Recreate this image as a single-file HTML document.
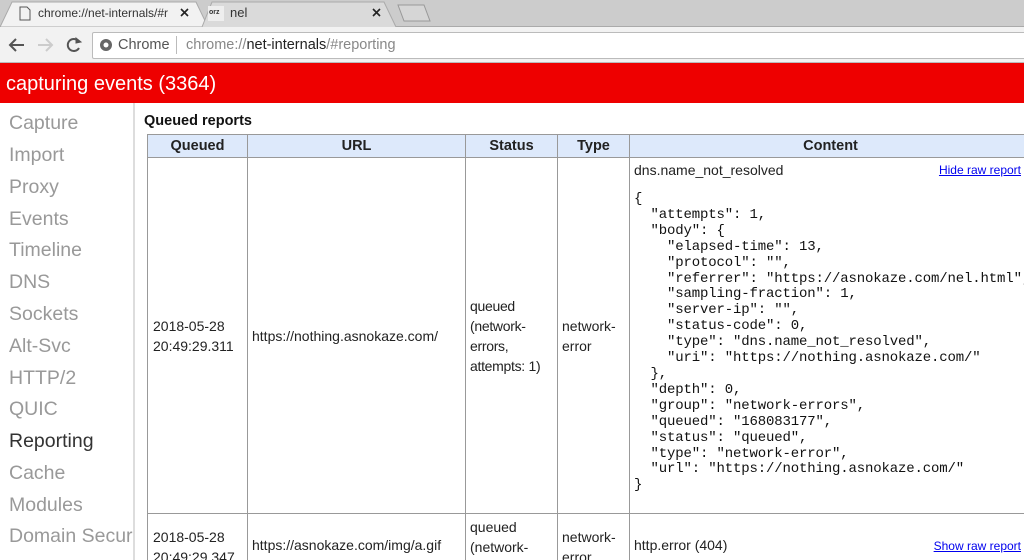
<!DOCTYPE html>
<html><head><meta charset="utf-8">
<style>
*{margin:0;padding:0;box-sizing:border-box}
html,body{width:1024px;height:560px;overflow:hidden}
body{background:#fff;font-family:"Liberation Sans",sans-serif;position:relative}
.abs{position:absolute;white-space:nowrap}
.tabs{position:absolute;left:0;top:0;width:1024px;height:27px;background:#cccccc;border-bottom:1px solid #aaa}
.tool{position:absolute;left:0;top:27px;width:1024px;height:36px;background:#f2f2f2;border-bottom:1px solid #bbb}
.addr{position:absolute;left:92px;top:32px;width:940px;height:27px;background:#fff;border:1px solid #bbb;border-radius:2px}
.red{position:absolute;left:0;top:63px;width:1024px;height:40px;background:#ee0000;color:#fff;font-size:20px;padding:10px 0 0 6px}
.side{position:absolute;left:9px;font-size:19.5px;color:#999}
.vline{position:absolute;left:133px;top:103px;width:2px;height:457px;background:#ddd}
table{position:absolute;left:147px;top:134px;border-collapse:collapse;font-size:14px;color:#222;table-layout:fixed;width:884px}
td,th{border:1px solid #999;padding:0 4px;vertical-align:middle;text-align:left;line-height:20px;overflow:hidden}
th{background:#dde9fb;text-align:center;font-weight:bold;height:23px;font-size:14.5px}
pre{font-family:"Liberation Mono",monospace;font-size:14px;line-height:15.9px;color:#111;letter-spacing:-0.15px}
a{color:#00e;font-size:12px}
</style></head><body>
<div class="tabs"></div>
<svg class="abs" style="left:0;top:0" width="432" height="28">
<path d="M0 27 L12 2 L196 2 L208 27 Z" fill="#f2f2f2" stroke="#aaa"/>
<path d="M202 27 L212 2 L384 2 L396 27" fill="#dadada" stroke="#aaa"/>
<path d="M398 5 L424 5 L430 21 L404 21 Z" fill="#d6d6d6" stroke="#999"/>
<path d="M20 7 h7 l3 3 v10 h-10 z" fill="none" stroke="#555"/>
<path d="M181 9 l7 7 M188 9 l-7 7" stroke="#222" stroke-width="1.6"/>
<path d="M373 9 l7 7 M380 9 l-7 7" stroke="#222" stroke-width="1.6"/>
<rect x="208" y="6" width="16" height="15" fill="#eee"/>
</svg>
<div class="abs" style="left:38px;top:6px;font-size:12px;color:#333">chrome://net-internals/#r</div>
<div class="abs" style="left:209px;top:9px;font-size:7px;font-weight:bold;color:#333">orz</div>
<div class="abs" style="left:230px;top:5px;font-size:13px;color:#333">nel</div>
<div class="tool"></div>
<svg class="abs" style="left:0;top:30px" width="92" height="30">
<path d="M24 15 H10 M16 9 L10 15 L16 21" fill="none" stroke="#555" stroke-width="2"/>
<path d="M38 15 H52 M46 9 L52 15 L46 21" fill="none" stroke="#ccc" stroke-width="2"/>
<path d="M79 12 A6 6 0 1 0 79 18" fill="none" stroke="#555" stroke-width="2"/>
<path d="M76 8 L81 12 L76 13 Z" fill="#555" stroke="#555"/>
</svg>
<div class="addr"></div>
<svg class="abs" style="left:99px;top:38px" width="14" height="14"><circle cx="7" cy="7" r="6" fill="#666"/><circle cx="7" cy="7" r="2.5" fill="#fff"/></svg>
<div class="abs" style="left:118px;top:37px;font-size:14.5px;color:#555">Chrome</div>
<div class="abs" style="left:176px;top:36px;width:1px;height:18px;background:#bbb"></div>
<div class="abs" style="left:186px;top:37px;font-size:14.5px;color:#888">chrome://<span style="color:#222">net-internals</span>/#reporting</div>
<div class="red">capturing events (3364)</div>
<div class="vline"></div>
<div class="side" style="top:112px">Capture</div>
<div class="side" style="top:144px">Import</div>
<div class="side" style="top:176px">Proxy</div>
<div class="side" style="top:208px">Events</div>
<div class="side" style="top:239px">Timeline</div>
<div class="side" style="top:271px">DNS</div>
<div class="side" style="top:303px">Sockets</div>
<div class="side" style="top:335px">Alt-Svc</div>
<div class="side" style="top:367px">HTTP/2</div>
<div class="side" style="top:398px">QUIC</div>
<div class="side" style="top:430px;color:#333">Reporting</div>
<div class="side" style="top:462px">Cache</div>
<div class="side" style="top:494px">Modules</div>
<div class="side" style="top:525px">Domain Secur</div>
<div class="abs" style="left:144px;top:113px;font-size:14.5px;font-weight:bold;color:#111">Queued reports</div>
<table>
<colgroup><col style="width:100px"><col style="width:218px"><col style="width:92px"><col style="width:72px"><col style="width:402px"></colgroup>
<tr><th>Queued</th><th>URL</th><th>Status</th><th>Type</th><th>Content</th></tr>
<tr style="height:356px"><td style="padding-left:5px">2018-05-28<br>20:49:29.311</td><td>https://nothing.asnokaze.com/</td><td style="letter-spacing:-0.3px">queued<br>(network-<br>errors,<br>attempts: 1)</td><td>network-<br>error</td>
<td style="vertical-align:top;position:relative;padding-top:2px">dns.name_not_resolved<a style="position:absolute;right:10px;top:2px;text-decoration:underline">Hide raw report</a>
<pre style="margin-top:12px">{
  "attempts": 1,
  "body": {
    "elapsed-time": 13,
    "protocol": "",
    "referrer": "https://asnokaze.com/nel.html",
    "sampling-fraction": 1,
    "server-ip": "",
    "status-code": 0,
    "type": "dns.name_not_resolved",
    "uri": "https://nothing.asnokaze.com/"
  },
  "depth": 0,
  "group": "network-errors",
  "queued": "168083177",
  "status": "queued",
  "type": "network-error",
  "url": "https://nothing.asnokaze.com/"
}</pre></td></tr>
<tr style="height:70px"><td style="vertical-align:top;padding-top:13px;padding-left:5px">2018-05-28<br>20:49:29.347</td><td style="vertical-align:top;padding-top:21px">https://asnokaze.com/img/a.gif</td><td style="vertical-align:top;padding-top:3px">queued<br>(network-</td><td style="vertical-align:top;padding-top:13px">network-<br>error</td><td style="vertical-align:top;position:relative;padding-top:21px">http.error (404)<a style="position:absolute;right:10px;top:22px;text-decoration:underline">Show raw report</a></td></tr>
</table>
</body></html>
